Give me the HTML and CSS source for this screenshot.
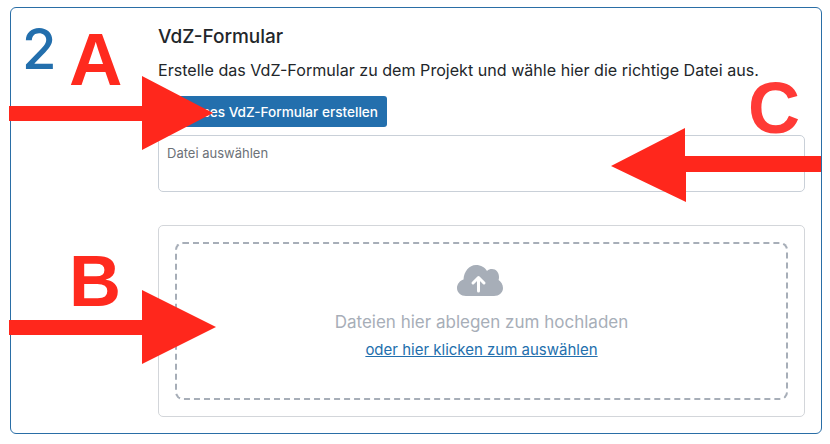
FILE: index.html
```html
<!DOCTYPE html>
<html lang="de">
<head>
    <meta charset="UTF-8">
    <title>VdZ-Formular</title>
    <link rel="stylesheet" href="styles.css">
</head>
<body>
    <div class="card">
        <div class="step">2</div>
        <div class="content">
            <h2>VdZ-Formular</h2>
            <p>Erstelle das VdZ-Formular zu dem Projekt und wähle hier die richtige Datei aus.</p>
            <button class="btn">Dieses VdZ-Formular erstellen</button>
            <div class="select-box">Datei auswählen</div>
            <div class="upload">
                <div class="dropzone">
                    <svg class="cloud" viewBox="0 0 46 31" width="46" height="31">
                        <path fill="#a7aeb8" d="M9 31C4 31 0 27.500 0 23 0 19 3 15.500 6.500 14.500 7 6.500 12 0 19 0 24 0 28 2.500 30 6 31.500 4.500 33 4 35 4 39 4 42 7.500 42 12 42 13 41.900 14 41.600 15 44 16.500 46 19.500 46 23 46 27.500 42 31 37 31z"/>
                        <path fill="none" stroke="#fff" stroke-width="3" stroke-linecap="round" stroke-linejoin="round" d="M21.500 26V12.500M16 18l5.500-5.500L27 18"/>
                    </svg>
                    <div class="drop-text">Dateien hier ablegen zum hochladen</div>
                    <a class="drop-link" href="#">oder hier klicken zum auswählen</a>
                </div>
            </div>
        </div>
    </div>

    <!-- annotations on top of the screenshot -->
    <div class="mark mark-a">A</div>
    <div class="mark mark-b">B</div>
    <div class="mark mark-c">C</div>
    <svg class="arrows" viewBox="0 0 830 444" width="830" height="444">
        <path d="M9 106H142V76L213 113 142 150V121H9z"/>
        <path d="M9 320H142V290L216 327 142 364V335H9z"/>
        <path d="M821 156H685V128L611 166 686 202V172H821z"/>
    </svg>
</body>
</html>
```

FILE: styles.css
```css
body {
    margin: 0;
    background-color: #fff;
    font-family: Inter, "Liberation Sans", sans-serif;
    color: #22262a;
}

.card {
    display: flex;
    box-sizing: border-box;
    width: 812px;
    height: 427px;
    margin: 7px 0 0 10px;
    padding: 0 16px 15px 13px;
    background-color: #fff;
    border: 1px solid #2a6ea6;
    border-radius: 6px;
}

.step {
    width: 134px;
    margin-left: -2px;
    margin-right: 2px;
    padding-top: 6px;
    font-size: 56px;
    font-weight: 500;
    line-height: 70px;
    color: #236fad;
}

.content {
    display: flex;
    flex-direction: column;
    flex: 1;
}

h2 {
    margin: 18px 0 0;
    font-size: 19px;
    font-weight: 500;
    line-height: 22px;
}

p {
    margin: 11px 0 0;
    font-size: 16.1px;
    line-height: 22px;
}

.btn {
    align-self: flex-start;
    width: 229px;
    height: 31px;
    margin-top: 15px;
    padding: 0 9px;
    background-color: #236fad;
    border: none;
    border-radius: 3px;
    color: #fff;
    font-family: inherit;
    font-size: 13.6px;
    font-weight: 500;
    text-align: right;
    white-space: nowrap;
}

.select-box {
    box-sizing: border-box;
    height: 57px;
    margin-top: 8px;
    padding: 9px 8px;
    border: 1px solid #c9d0d8;
    border-radius: 5px;
    font-size: 13px;
    line-height: 16px;
    color: #6c7177;
}

.upload {
    box-sizing: border-box;
    height: 192px;
    margin-top: 33px;
    padding: 16px 16px;
    border: 1px solid #d3d6da;
    border-radius: 5px;
}

.dropzone {
    display: flex;
    flex-direction: column;
    align-items: center;
    box-sizing: border-box;
    height: 158px;
    padding-top: 21px;
    border: 2px dashed #a7aeb8;
    border-radius: 8px;
}

.cloud {
    display: block;
    margin-right: 3px;
}

.drop-text {
    margin-top: 16px;
    font-size: 17px;
    line-height: 20px;
    color: #a7aeb8;
}

.drop-link {
    margin-top: 8px;
    font-size: 15px;
    line-height: 20px;
    color: #236fad;
}

.mark {
    position: absolute;
    font-family: "Liberation Sans", Arial, sans-serif;
    font-weight: 700;
    font-size: 74px;
    line-height: 74px;
    color: #ff2a1e;
}

.mark-a {
    left: 69px;
    top: 23px;
}

.mark-b {
    left: 69px;
    top: 244px;
    font-size: 72px;
}

.mark-c {
    left: 748px;
    top: 71px;
    color: #ff3a36;
    font-size: 72px;
}

.arrows {
    position: absolute;
    left: 0;
    top: 0;
    fill: #ff271c;
}
```
